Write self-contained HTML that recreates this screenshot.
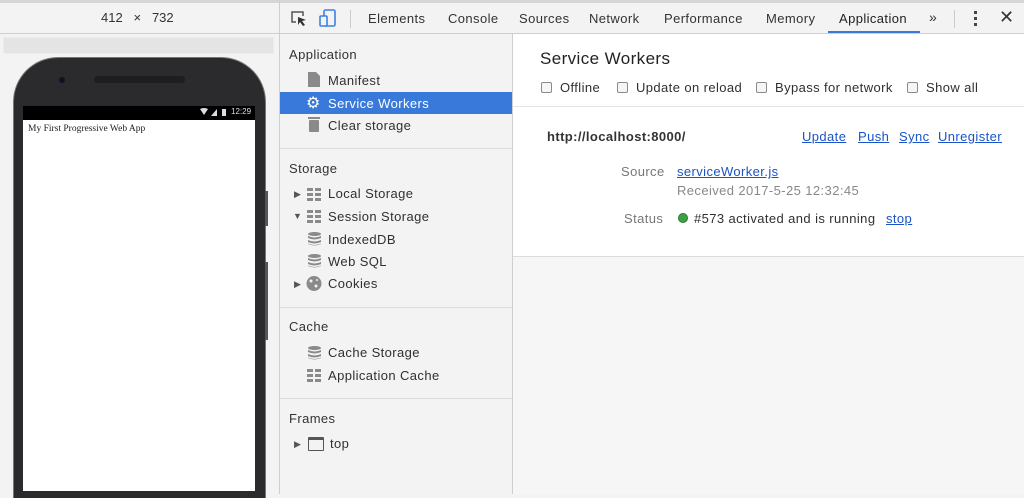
<!DOCTYPE html>
<html><head><meta charset="utf-8"><style>
*{margin:0;padding:0;box-sizing:border-box}
body{width:1024px;height:494px;overflow:hidden;background:#f3f3f3;font-family:"Liberation Sans","DejaVu Sans",sans-serif;font-size:13px;color:#303030;position:relative;letter-spacing:0.4px}
.a{position:absolute}
.t{position:absolute;white-space:nowrap}
.link{color:#1a53c8;text-decoration:underline}
.cb{position:absolute;width:11px;height:11px;border:1px solid #8a8a8a;border-radius:2px;background:#f6f6f6}
.ic{position:absolute;fill:#8a8a8a}
</style></head><body>
<div class="a" style="left:0;top:0;width:279px;height:494px;background:#f3f3f3"></div>
<div class="a" style="left:0;top:0;width:279px;height:3px;background:#d6d6d6"></div>
<div class="a" style="left:0;top:33px;width:279px;height:1px;background:#cfcfcf"></div>
<div class="t" style="left:101px;top:10px;font-size:13px;color:#333;letter-spacing:0">412&nbsp;&nbsp;&nbsp;×&nbsp;&nbsp;&nbsp;732</div>
<div class="a" style="left:3px;top:37px;width:271px;height:17px;background:#e4e4e4;border:1px solid #ececec"></div>
<div class="a" style="left:14px;top:58px;width:251px;height:440px;background:#2b2a2d;border-radius:44px 44px 0 0;box-shadow:0 0 0 1px #777"></div>
<div class="a" style="left:59px;top:77px;width:6px;height:6px;border-radius:50%;background:#111024"></div>
<div class="a" style="left:94px;top:76px;width:91px;height:7px;border-radius:4px;background:#1e1e20"></div>
<div class="a" style="left:265px;top:191px;width:3px;height:35px;background:#555"></div>
<div class="a" style="left:265px;top:262px;width:3px;height:78px;background:#555"></div>
<div class="a" style="left:23px;top:106px;width:232px;height:14px;background:#000"></div>
<div class="t" style="left:231px;top:107px;font-size:8px;color:#ddd;letter-spacing:0">12:29</div>
<div class="a" style="left:222px;top:109px;width:4px;height:7px;background:#ddd"></div>
<svg class="a" style="left:200px;top:108px" width="20" height="9"><path d="M0 1 Q4 -1 8 1 L4 7Z" fill="#ddd"/><path d="M11 8 L17 1 L17 8Z" fill="#ddd"/></svg>
<div class="a" style="left:23px;top:120px;width:232px;height:371px;background:#fff"></div>
<div class="t" style="left:28px;top:124px;font-family:'Liberation Serif',serif;font-size:9.5px;color:#222;letter-spacing:0">My First Progressive Web App</div>
<div class="a" style="left:279px;top:0;width:1px;height:494px;background:#cfcfcf"></div>

<div class="a" style="left:280px;top:0;width:744px;height:3px;background:#d6d6d6"></div>
<div class="a" style="left:280px;top:3px;width:744px;height:31px;background:#f3f3f3;border-bottom:1px solid #cfcfcf"></div>
<svg class="a" style="left:290px;top:10px" width="18" height="17"><path d="M6 12 H2 V2 H13 V6" fill="none" stroke="#555" stroke-width="1.5"/><path d="M8 7 L16 10 L12 11 L15 15 L13 16 L10 12 L8 15Z" fill="#333"/></svg>
<svg class="a" style="left:319px;top:9px" width="18" height="19"><rect x="5" y="1" width="11" height="16" rx="1.5" fill="none" stroke="#3c81e0" stroke-width="1.6"/><rect x="1" y="7" width="7" height="10" rx="1" fill="#f3f3f3" stroke="#3c81e0" stroke-width="1.6"/></svg>
<div class="a" style="left:350px;top:10px;width:1px;height:18px;background:#ccc"></div>
<div class="t" style="left:368px;top:11px;color:#333">Elements</div>
<div class="t" style="left:448px;top:11px;color:#333">Console</div>
<div class="t" style="left:519px;top:11px;color:#333">Sources</div>
<div class="t" style="left:589px;top:11px;color:#333">Network</div>
<div class="t" style="left:664px;top:11px;color:#333">Performance</div>
<div class="t" style="left:766px;top:11px;color:#333">Memory</div>
<div class="t" style="left:839px;top:11px;color:#222">Application</div>
<div class="a" style="left:828px;top:31px;width:92px;height:2px;background:#3879d9"></div>
<div class="t" style="left:929px;top:9px;font-size:14px;color:#333">»</div>
<div class="a" style="left:954px;top:10px;width:1px;height:18px;background:#ccc"></div>
<div class="a" style="left:974px;top:11px;width:3px;height:3px;background:#444;box-shadow:0 6px 0 #444,0 12px 0 #444"></div>
<div class="t" style="left:999px;top:7px;font-size:18px;color:#333">✕</div>

<div class="a" style="left:512px;top:34px;width:1px;height:460px;background:#cfcfcf"></div>
<div class="t" style="left:289px;top:47px;color:#333">Application</div>
<svg class="ic" style="left:308px;top:72px" width="12" height="15"><path d="M0 0 H8 L12 4 V15 H0Z"/></svg>
<div class="t" style="left:328px;top:73px">Manifest</div>
<div class="a" style="left:280px;top:92px;width:232px;height:22px;background:#3879d9"></div>
<div class="t" style="left:306px;top:93px;font-size:16px;color:#fff">⚙</div>
<div class="t" style="left:328px;top:96px;color:#fff">Service Workers</div>
<svg class="ic" style="left:308px;top:117px" width="12" height="15"><rect x="0" y="0" width="12" height="2"/><rect x="1" y="3" width="10" height="12" rx="1"/></svg>
<div class="t" style="left:328px;top:118px">Clear storage</div>
<div class="a" style="left:280px;top:148px;width:232px;height:1px;background:#dcdcdc"></div>
<div class="t" style="left:289px;top:161px;color:#333">Storage</div>
<div class="t" style="left:294px;top:189px;font-size:9px;color:#555">▶</div>
<svg class="ic" style="left:307px;top:188px" width="14" height="13"><path d="M0 0H6V3H0ZM8 0H14V3H8ZM0 5H6V8H0ZM8 5H14V8H8ZM0 10H6V13H0ZM8 10H14V13H8Z"/></svg>
<div class="t" style="left:328px;top:186px">Local Storage</div>
<div class="t" style="left:293px;top:211px;font-size:9px;color:#555">▼</div>
<svg class="ic" style="left:307px;top:210px" width="14" height="13"><path d="M0 0H6V3H0ZM8 0H14V3H8ZM0 5H6V8H0ZM8 5H14V8H8ZM0 10H6V13H0ZM8 10H14V13H8Z"/></svg>
<div class="t" style="left:328px;top:209px">Session Storage</div>
<svg class="ic" style="left:308px;top:232px" width="13" height="14"><ellipse cx="6.5" cy="2" rx="6.5" ry="2"/><path d="M0 4Q6.5 7 13 4V6Q6.5 9 0 6ZM0 8Q6.5 11 13 8V10Q6.5 13 0 10ZM0 11.5Q6.5 14.5 13 11.5V12Q6.5 15 0 12Z"/></svg>
<div class="t" style="left:328px;top:232px">IndexedDB</div>
<svg class="ic" style="left:308px;top:254px" width="13" height="14"><ellipse cx="6.5" cy="2" rx="6.5" ry="2"/><path d="M0 4Q6.5 7 13 4V6Q6.5 9 0 6ZM0 8Q6.5 11 13 8V10Q6.5 13 0 10ZM0 11.5Q6.5 14.5 13 11.5V12Q6.5 15 0 12Z"/></svg>
<div class="t" style="left:328px;top:254px">Web SQL</div>
<div class="t" style="left:294px;top:279px;font-size:9px;color:#555">▶</div>
<svg class="ic" style="left:306px;top:276px" width="16" height="15"><circle cx="8" cy="7.5" r="7.5"/><circle cx="5" cy="5" r="1.5" fill="#f3f3f3"/><circle cx="10" cy="10" r="1.5" fill="#f3f3f3"/><circle cx="11" cy="4" r="1" fill="#f3f3f3"/></svg>
<div class="t" style="left:328px;top:276px">Cookies</div>
<div class="a" style="left:280px;top:307px;width:232px;height:1px;background:#dcdcdc"></div>
<div class="t" style="left:289px;top:319px;color:#333">Cache</div>
<svg class="ic" style="left:308px;top:346px" width="13" height="14"><ellipse cx="6.5" cy="2" rx="6.5" ry="2"/><path d="M0 4Q6.5 7 13 4V6Q6.5 9 0 6ZM0 8Q6.5 11 13 8V10Q6.5 13 0 10ZM0 11.5Q6.5 14.5 13 11.5V12Q6.5 15 0 12Z"/></svg>
<div class="t" style="left:328px;top:345px">Cache Storage</div>
<svg class="ic" style="left:307px;top:369px" width="14" height="13"><path d="M0 0H6V3H0ZM8 0H14V3H8ZM0 5H6V8H0ZM8 5H14V8H8ZM0 10H6V13H0ZM8 10H14V13H8Z"/></svg>
<div class="t" style="left:328px;top:368px">Application Cache</div>
<div class="a" style="left:280px;top:398px;width:232px;height:1px;background:#dcdcdc"></div>
<div class="t" style="left:289px;top:411px;color:#333">Frames</div>
<div class="t" style="left:294px;top:439px;font-size:9px;color:#555">▶</div>
<div class="a" style="left:308px;top:437px;width:16px;height:14px;border:1.5px solid #555;border-top-width:3px;border-radius:1px"></div>
<div class="t" style="left:330px;top:436px">top</div>

<div class="a" style="left:513px;top:34px;width:511px;height:460px;background:#f6f6f6"></div>
<div class="a" style="left:513px;top:34px;width:511px;height:222px;background:#fff"></div>
<div class="a" style="left:513px;top:106px;width:511px;height:1px;background:#e4e4e4"></div>
<div class="a" style="left:513px;top:256px;width:511px;height:1px;background:#dcdcdc"></div>
<div class="t" style="left:540px;top:49px;font-size:17px;color:#222">Service Workers</div>
<div class="cb" style="left:541px;top:82px"></div><div class="t" style="left:560px;top:80px">Offline</div>
<div class="cb" style="left:617px;top:82px"></div><div class="t" style="left:636px;top:80px">Update on reload</div>
<div class="cb" style="left:756px;top:82px"></div><div class="t" style="left:775px;top:80px">Bypass for network</div>
<div class="cb" style="left:907px;top:82px"></div><div class="t" style="left:926px;top:80px">Show all</div>
<div class="t" style="left:547px;top:129px;font-weight:bold;color:#333">http://localhost:8000/</div>
<div class="t link" style="left:802px;top:129px">Update</div>
<div class="t link" style="left:858px;top:129px">Push</div>
<div class="t link" style="left:899px;top:129px">Sync</div>
<div class="t link" style="left:938px;top:129px">Unregister</div>
<div class="t" style="left:621px;top:164px;color:#777">Source</div>
<div class="t link" style="left:677px;top:164px">serviceWorker.js</div>
<div class="t" style="left:677px;top:183px;color:#888">Received 2017-5-25 12:32:45</div>
<div class="t" style="left:624px;top:211px;color:#777">Status</div>
<div class="a" style="left:678px;top:213px;width:10px;height:10px;border-radius:50%;background:#3ea044;border:1px solid #2b7a30"></div>
<div class="t" style="left:694px;top:211px">#573 activated and is running</div>
<div class="t link" style="left:886px;top:211px">stop</div>
</body></html>
